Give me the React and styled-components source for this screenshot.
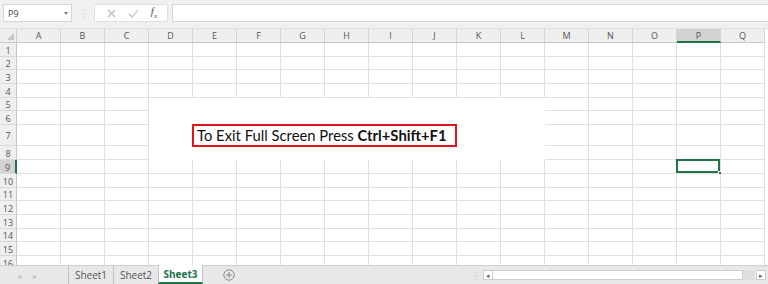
import React from 'react';
import styled, { createGlobalStyle } from 'styled-components';

const GlobalStyle = createGlobalStyle`
  html, body {
    margin: 0;
    padding: 0;
    background: #ffffff;
  }
  body {
    font-family: "Open Sans", "Liberation Sans", sans-serif;
  }
`;

const COLUMNS = ['A', 'B', 'C', 'D', 'E', 'F', 'G', 'H', 'I', 'J', 'K', 'L', 'M', 'N', 'O', 'P', 'Q'];
const ROW_HEIGHTS = [14, 13, 14, 14, 13, 14, 21, 14, 14, 14, 13, 14, 14, 13, 14, 14];
const SELECTED = { col: 'P', row: 9 };
const SHEETS = ['Sheet1', 'Sheet2', 'Sheet3'];
const ACTIVE_SHEET = 'Sheet3';

function App() {
  return (
    <>
      <GlobalStyle />
      <Window>
        <FormulaBar>
          <NameBox>
            <span>P9</span>
            <DropArrow />
          </NameBox>
          <Grip>⋮</Grip>
          <FuncBox>
            <FuncIcon>
              <svg width="9" height="9" viewBox="0 0 9 9">
                <path d="M1 1 L8 8 M8 1 L1 8" stroke="#b9b9b9" strokeWidth="1.1" fill="none" />
              </svg>
            </FuncIcon>
            <FuncIcon>
              <svg width="11" height="9" viewBox="0 0 11 9">
                <path d="M1 5 L4 8 L10 1" stroke="#b9b9b9" strokeWidth="1.1" fill="none" />
              </svg>
            </FuncIcon>
            <Fx>
              f<sub>x</sub>
            </Fx>
          </FuncBox>
          <FormulaInput />
        </FormulaBar>

        <SheetArea>
          <Grid>
            <Corner />
            {COLUMNS.map((c) => (
              <ColHeader key={c} $active={c === SELECTED.col}>
                {c}
              </ColHeader>
            ))}
            {ROW_HEIGHTS.map((h, i) => {
              const row = i + 1;
              return (
                <React.Fragment key={row}>
                  <RowHeader style={{ height: h }} $active={row === SELECTED.row}>
                    {row}
                  </RowHeader>
                  {COLUMNS.map((c) => (
                    <Cell
                      key={c}
                      style={{ height: h }}
                      $selected={row === SELECTED.row && c === SELECTED.col}
                    />
                  ))}
                </React.Fragment>
              );
            })}
          </Grid>

          <Notice>
            <NoticeText>
              To Exit Full Screen Press <b>Ctrl+Shift+F1</b>
            </NoticeText>
          </Notice>
        </SheetArea>

        <TabBar>
          <NavArrows>
            <span>◂</span>
            <span>▸</span>
          </NavArrows>
          {SHEETS.map((s) => (
            <SheetTab key={s} $active={s === ACTIVE_SHEET}>
              {s}
            </SheetTab>
          ))}
          <AddSheet>
            <svg width="12" height="12" viewBox="0 0 12 12">
              <circle cx="6" cy="6" r="5.2" stroke="#8a8a8a" strokeWidth="1" fill="none" />
              <path d="M6 3 V9 M3 6 H9" stroke="#8a8a8a" strokeWidth="1.1" />
            </svg>
          </AddSheet>
          <TabSpacer />
          <Grip $small>⋮</Grip>
          <HScroll>
            <ScrollBtn>◂</ScrollBtn>
            <ScrollTrack />
            <ScrollGap />
            <ScrollBtn>▸</ScrollBtn>
          </HScroll>
        </TabBar>
      </Window>
    </>
  );
}

const Window = styled.div`
  width: 768px;
  height: 284px;
  display: flex;
  flex-direction: column;
  overflow: hidden;
  background: #ffffff;
`;

const FormulaBar = styled.div`
  height: 29px;
  flex: none;
  display: flex;
  align-items: flex-start;
  padding: 4px 0 0 3px;
  box-sizing: border-box;
  background: #f0f0f0;
  border-bottom: 1px solid #e2e2e2;
`;

const NameBox = styled.div`
  width: 69px;
  height: 18px;
  box-sizing: border-box;
  background: #fff;
  border: 1px solid #d6d6d6;
  display: flex;
  align-items: center;
  justify-content: space-between;
  padding: 0 3px 0 4px;
  font-size: 9px;
  color: #444;
`;

const DropArrow = styled.i`
  width: 0;
  height: 0;
  border-left: 2.5px solid transparent;
  border-right: 2.5px solid transparent;
  border-top: 3px solid #777;
`;

const Grip = styled.div`
  width: ${(p) => (p.$small ? '11px' : '22px')};
  height: 18px;
  display: flex;
  align-items: center;
  justify-content: center;
  color: #c8c8c8;
  font-size: 11px;
  align-self: ${(p) => (p.$small ? 'center' : 'auto')};
`;

const FuncBox = styled.div`
  width: 74px;
  height: 18px;
  box-sizing: border-box;
  background: #fff;
  border: 1px solid #e0e0e0;
  display: flex;
  align-items: center;
  justify-content: space-around;
  padding: 0 4px 0 6px;
`;

const FuncIcon = styled.span`
  display: flex;
  align-items: center;
`;

const Fx = styled.span`
  font-family: "Liberation Serif", serif;
  font-style: italic;
  font-size: 11px;
  color: #555;
  line-height: 1;
  sub {
    font-size: 7px;
  }
`;

const FormulaInput = styled.div`
  flex: 1;
  height: 18px;
  margin-left: 4px;
  box-sizing: border-box;
  background: #fff;
  border: 1px solid #d6d6d6;
  border-right: none;
`;

const SheetArea = styled.div`
  position: relative;
  flex: 1;
  overflow: hidden;
`;

const Grid = styled.div`
  display: grid;
  grid-template-columns: 17px repeat(17, 44px);
  grid-auto-rows: min-content;
`;

const headerBase = `
  box-sizing: border-box;
  background: #efefef;
  color: #555;
  font-family: "Open Sans", "Liberation Sans", sans-serif;
  font-size: 9px;
  display: flex;
  align-items: center;
`;

const Corner = styled.div`
  ${headerBase}
  height: 14px;
  border-right: 1px solid #d0d0d0;
  border-bottom: 1px solid #c8c8c8;
  position: relative;
  &::after {
    content: '';
    position: absolute;
    right: 2px;
    bottom: 2px;
    border-left: 7px solid transparent;
    border-bottom: 7px solid #c4c4c4;
  }
`;

const ColHeader = styled.div`
  ${headerBase}
  height: 14px;
  justify-content: center;
  border-right: 1px solid #d6d6d6;
  border-bottom: ${(p) => (p.$active ? '2px solid #217346' : '1px solid #c8c8c8')};
  background: ${(p) => (p.$active ? '#d2d2d2' : '#efefef')};
`;

const RowHeader = styled.div`
  ${headerBase}
  justify-content: center;
  padding-top: 1px;
  overflow: hidden;
  border-bottom: 1px solid #dadada;
  border-right: ${(p) => (p.$active ? '2px solid #217346' : '1px solid #c8c8c8')};
  background: ${(p) => (p.$active ? '#d2d2d2' : '#efefef')};
`;

const Cell = styled.div`
  box-sizing: border-box;
  border-right: 1px solid #e0e0e0;
  border-bottom: 1px solid #e0e0e0;
  position: relative;
  ${(p) =>
    p.$selected &&
    `
    &::before {
      content: '';
      position: absolute;
      left: -1px;
      top: -1px;
      right: 0;
      bottom: 0;
      border: 2px solid #217346;
    }
    &::after {
      content: '';
      position: absolute;
      right: -2px;
      bottom: -2px;
      width: 4px;
      height: 4px;
      background: #217346;
      border: 1px solid #fff;
      box-sizing: border-box;
    }
  `}
`;

const Notice = styled.div`
  position: absolute;
  left: 149px;
  top: 69px;
  width: 396px;
  height: 62px;
  background: #fff;
  box-sizing: border-box;
  padding: 26px 0 0 43px;
`;

const NoticeText = styled.div`
  display: inline-block;
  box-sizing: border-box;
  height: 23px;
  border: 2px solid #e0131d;
  padding: 0 8px 0 3px;
  font-family: "Lato", "Liberation Sans", sans-serif;
  font-size: 14.8px;
  line-height: 19px;
  color: #111;
  white-space: nowrap;
  b {
    font-weight: 700;
  }
`;

const TabBar = styled.div`
  height: 19px;
  flex: none;
  display: flex;
  align-items: stretch;
  background: #e8e8e8;
  border-top: 1px solid #cfcfcf;
  box-sizing: border-box;
  font-family: "Open Sans", "Liberation Sans", sans-serif;
`;

const NavArrows = styled.div`
  width: 68px;
  display: flex;
  align-items: center;
  padding-left: 17px;
  gap: 12px;
  box-sizing: border-box;
  color: #c4c4c4;
  font-size: 8px;
`;

const SheetTab = styled.div`
  width: 45px;
  display: flex;
  align-items: center;
  justify-content: center;
  box-sizing: border-box;
  font-size: 10px;
  border-left: 1px solid #c2c2c2;
  color: ${(p) => (p.$active ? '#217346' : '#555')};
  font-weight: ${(p) => (p.$active ? 700 : 400)};
  background: ${(p) => (p.$active ? '#fff' : 'transparent')};
  border-bottom: ${(p) => (p.$active ? '2px solid #217346' : 'none')};
  margin-top: ${(p) => (p.$active ? '-1px' : '0')};
  border-right: ${(p) => (p.$active ? '1px solid #c2c2c2' : 'none')};
`;

const AddSheet = styled.div`
  width: 52px;
  display: flex;
  align-items: center;
  justify-content: center;
`;

const TabSpacer = styled.div`
  flex: 1;
`;

const HScroll = styled.div`
  width: 287px;
  display: flex;
  align-items: center;
  padding: 0 2px 0 2px;
  box-sizing: border-box;
`;

const ScrollBtn = styled.div`
  width: 10px;
  height: 10px;
  box-sizing: border-box;
  background: #fff;
  border: 1px solid #cdcdcd;
  display: flex;
  align-items: center;
  justify-content: center;
  font-size: 7px;
  color: #666;
`;

const ScrollTrack = styled.div`
  width: 250px;
  height: 10px;
  box-sizing: border-box;
  background: #fff;
  border: 1px solid #cdcdcd;
  border-left: none;
`;

const ScrollGap = styled.div`
  flex: 1;
  height: 10px;
  background: #dedede;
  margin-right: 2px;
`;

export default App;
